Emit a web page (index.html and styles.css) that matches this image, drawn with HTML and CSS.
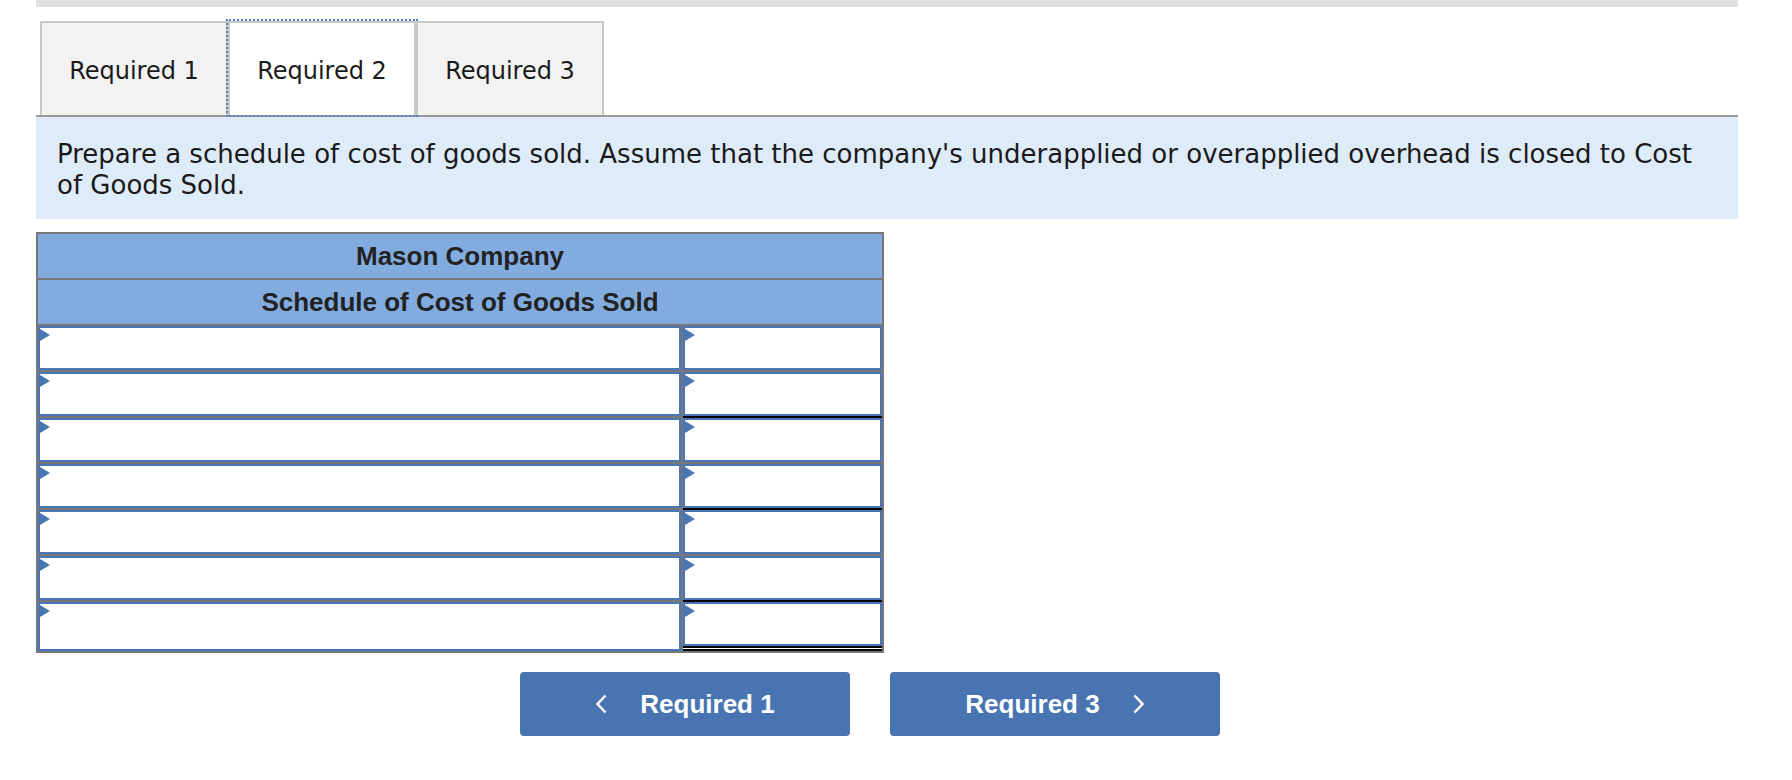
FILE: index.html
```html
<!DOCTYPE html>
<html lang="en">
<head>
<meta charset="utf-8">
<title>Required 2</title>
<link rel="stylesheet" href="styles.css">
</head>
<body>
<div class="page">
  <div class="topbar"></div>
  <div class="tabs">
    <div class="tab">Required 1</div>
    <div class="tab active">Required 2</div>
    <div class="tab">Required 3</div>
  </div>
  <div class="prompt">Prepare a schedule of cost of goods sold. Assume that the company's underapplied or overapplied overhead is closed to Cost of Goods Sold.</div>
  <div class="sheet">
    <div class="head">Mason Company</div>
    <div class="head">Schedule of Cost of Goods Sold</div>

    <div class="cell"><div class="field"></div></div>
    <div class="cell"><div class="field"></div></div>

    <div class="cell"><div class="field"></div></div>
    <div class="cell under"><div class="field"></div></div>

    <div class="cell"><div class="field"></div></div>
    <div class="cell"><div class="field"></div></div>

    <div class="cell"><div class="field"></div></div>
    <div class="cell under"><div class="field"></div></div>

    <div class="cell"><div class="field"></div></div>
    <div class="cell"><div class="field"></div></div>

    <div class="cell"><div class="field"></div></div>
    <div class="cell under"><div class="field"></div></div>

    <div class="cell"><div class="field"></div></div>
    <div class="cell double"><div class="field"></div></div>
  </div>
  <div class="nav">
    <button class="navbtn" type="button">
      <svg class="chev" width="12" height="20" viewBox="0 0 12 20"><path d="M10.5 1.5 L2.5 10 L10.5 18.5" /></svg>
      <span>Required 1</span>
    </button>
    <button class="navbtn" type="button">
      <span>Required 3</span>
      <svg class="chev" width="12" height="20" viewBox="0 0 12 20"><path d="M1.5 1.5 L9.5 10 L1.5 18.5" /></svg>
    </button>
  </div>
</div>
</body>
</html>
```

FILE: styles.css
```css
* { box-sizing: border-box; }

body {
  margin: 0;
  background: #ffffff;
  font-family: "DejaVu Sans", Verdana, sans-serif;
  color: #1f1f1f;
}

.page {
  margin-left: 36px;
  width: 1702px;
}

.topbar {
  height: 7px;
  background: #e0e0e0;
}

.tabs {
  display: flex;
  margin-top: 14px;
  padding-left: 4px;
  position: relative;
  z-index: 1;
}

.tab {
  width: 188px;
  height: 94px;
  display: flex;
  align-items: center;
  justify-content: center;
  padding-top: 4px;
  background: #f2f2f2;
  border: 2px solid #c9c9c9;
  border-bottom: 0;
  font-size: 24px;
  color: #1a1a1a;
}

.tab.active {
  background: #ffffff;
  outline: 2px dotted #4f7fc6;
}

.prompt {
  border-top: 2px solid #9a9a9a;
  background: #deebf8;
  padding: 22px 21px 18px;
  font-size: 26px;
  line-height: 31px;
  color: #1a1a1a;
}

.sheet {
  margin-top: 13px;
  width: 848px;
  display: grid;
  grid-template-columns: 643px 199px;
  gap: 2px;
  border: 2px solid #777777;
  background: #777777;
}

.head {
  grid-column: 1 / -1;
  height: 44px;
  background: #82acdf;
  display: flex;
  align-items: center;
  justify-content: center;
  font-family: "Liberation Sans", Arial, sans-serif;
  font-weight: bold;
  font-size: 26px;
  color: #222222;
}

.cell {
  background: #ffffff;
  display: flex;
  flex-direction: column;
  min-height: 44px;
}

.field {
  flex: 1;
  min-height: 44px;
  border: 2px solid #4a76b3;
  position: relative;
}

.field::before {
  content: "";
  position: absolute;
  left: 0;
  top: 1px;
  border-left: 10px solid #4a76b3;
  border-top: 6px solid transparent;
  border-bottom: 6px solid transparent;
}

.cell.under {
  box-shadow: 0 2px 0 #000000;
}

.cell.double {
  border-bottom: 5px double #000000;
}

.cell.double .field {
  flex: none;
  height: 44px;
}

.nav {
  display: flex;
  justify-content: center;
  gap: 40px;
  margin-top: 19px;
  padding-right: 34px;
}

.navbtn {
  width: 330px;
  height: 64px;
  border: 0;
  border-radius: 4px;
  background: #4874b2;
  color: #ffffff;
  font-family: "Liberation Sans", Arial, sans-serif;
  font-weight: bold;
  font-size: 26px;
  display: flex;
  align-items: center;
  justify-content: center;
  gap: 33px;
  padding: 0;
}

.chev path {
  fill: none;
  stroke: #ffffff;
  stroke-width: 2.5;
}
```
